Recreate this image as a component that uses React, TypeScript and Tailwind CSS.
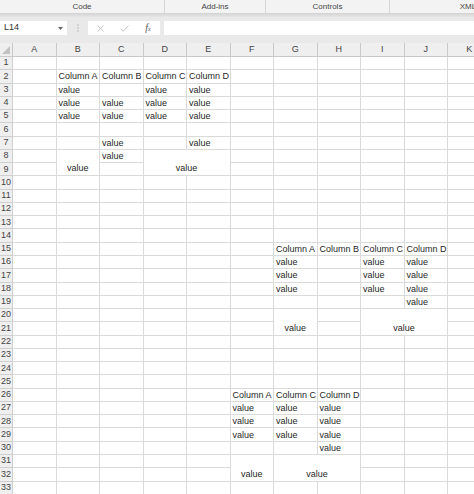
import React from 'react';

const COLS = ['A', 'B', 'C', 'D', 'E', 'F', 'G', 'H', 'I', 'J', 'K'];
const ROWS = Array.from({ length: 33 }, (_, i) => i + 1);

const V = 'value';

// cell contents by address
const CELLS: Record<string, string> = {
  B2: 'Column A', C2: 'Column B', D2: 'Column C', E2: 'Column D',
  B3: V, D3: V, E3: V,
  B4: V, C4: V, D4: V, E4: V,
  B5: V, C5: V, D5: V, E5: V,
  C7: V, E7: V,
  C8: V,
  B8: V, D8: V,

  G15: 'Column A', H15: 'Column B', I15: 'Column C', J15: 'Column D',
  G16: V, I16: V, J16: V,
  G17: V, I17: V, J17: V,
  G18: V, I18: V, J18: V,
  J19: V,
  G20: V, I20: V,

  F26: 'Column A', G26: 'Column C', H26: 'Column D',
  F27: V, G27: V, H27: V,
  F28: V, G28: V, H28: V,
  F29: V, G29: V, H29: V,
  H30: V,
  F31: V, G31: V,
};

// merged ranges: top-left cell -> span classes, plus the cells they hide
const MERGES: Record<string, { cls: string; covers: string[] }> = {
  B8: { cls: 'row-span-2', covers: ['B9'] },
  D8: { cls: 'row-span-2 col-span-2', covers: ['E8', 'D9', 'E9'] },
  G20: { cls: 'row-span-2', covers: ['G21'] },
  I20: { cls: 'row-span-2 col-span-2', covers: ['J20', 'I21', 'J21'] },
  F31: { cls: 'row-span-2', covers: ['F32'] },
  G31: { cls: 'row-span-2 col-span-2', covers: ['H31', 'G32', 'H32'] },
};

const COVERED = new Set(Object.values(MERGES).flatMap((m) => m.covers));

function RibbonLabels() {
  return (
    <div className="flex h-[13px] bg-[#f3f3f3] text-[8px] leading-[13px] text-[#444] overflow-hidden whitespace-nowrap">
      <div className="w-[165px] shrink-0 text-center border-r border-[#d6d6d6]">Code</div>
      <div className="w-[101px] shrink-0 text-center border-r border-[#d6d6d6]">Add-ins</div>
      <div className="w-[124px] shrink-0 text-center border-r border-[#d6d6d6]">Controls</div>
      <div className="w-[156px] shrink-0 text-center">XML</div>
    </div>
  );
}

function FormulaBar() {
  return (
    <div className="flex h-[26px] bg-[#e9e9e9] pt-[4px] items-start">
      <div className="w-[67px] h-[14px] bg-white flex items-center justify-between pl-[4px] pr-[4px]">
        <span className="text-[9px] text-[#333]">L14</span>
        <svg width="5" height="3" viewBox="0 0 5 3">
          <path d="M0 0 L5 0 L2.5 3 Z" fill="#666" />
        </svg>
      </div>
      <div className="w-[21px] h-[14px] flex items-center justify-center">
        <svg width="2" height="8" viewBox="0 0 2 8">
          <circle cx="1" cy="1" r="0.7" fill="#aaa" />
          <circle cx="1" cy="4" r="0.7" fill="#aaa" />
          <circle cx="1" cy="7" r="0.7" fill="#aaa" />
        </svg>
      </div>
      <div className="w-[72px] h-[14px] bg-white flex items-center">
        <div className="w-[24px] flex justify-center">
          <svg width="7" height="7" viewBox="0 0 7 7">
            <path d="M0.5 0.5 L6.5 6.5 M6.5 0.5 L0.5 6.5" stroke="#bdbdbd" strokeWidth="0.9" />
          </svg>
        </div>
        <div className="w-[24px] flex justify-center">
          <svg width="9" height="7" viewBox="0 0 9 7">
            <path d="M0.5 3.8 L3.2 6.3 L8.5 0.5" stroke="#bdbdbd" strokeWidth="0.9" fill="none" />
          </svg>
        </div>
        <div className="w-[24px] flex justify-center">
          <span className="font-['Liberation_Serif',serif] italic text-[10px] text-[#555] leading-none">
            f<span className="text-[6px]">x</span>
          </span>
        </div>
      </div>
      <div className="ml-[4px] flex-1 h-[14px] bg-white" />
    </div>
  );
}

function Sheet() {
  const cells: React.ReactNode[] = [];

  // header row
  cells.push(
    <div key="corner" className="bg-[#efefef] border-r border-b border-[#c9c9c9] relative">
      <svg className="absolute right-[2px] bottom-[2px]" width="8" height="8" viewBox="0 0 8 8">
        <path d="M8 0 L8 8 L0 8 Z" fill="#c2c2c2" />
      </svg>
    </div>
  );
  COLS.forEach((c) =>
    cells.push(
      <div
        key={`h-${c}`}
        className="bg-[#efefef] border-r border-b border-[#c9c9c9] flex items-center justify-center text-[9px] text-[#444]"
      >
        {c}
      </div>
    )
  );

  ROWS.forEach((r) => {
    cells.push(
      <div
        key={`r-${r}`}
        className="bg-[#efefef] border-r border-b border-[#cfcfcf] flex items-center justify-center text-[9px] text-[#444] overflow-hidden"
      >
        {r}
      </div>
    );
    COLS.forEach((c) => {
      const addr = `${c}${r}`;
      if (COVERED.has(addr)) return;
      const merge = MERGES[addr];
      const text = CELLS[addr];
      cells.push(
        <div
          key={addr}
          className={
            merge
              ? `${merge.cls} border-r border-b border-[#dadada] flex items-end justify-center pb-[2px] text-[9px] leading-[10px] text-[#1f1f1f] whitespace-nowrap`
              : 'border-r border-b border-[#dadada] flex items-center pl-[2px] text-[9px] leading-[10px] text-[#1f1f1f] whitespace-nowrap overflow-visible'
          }
        >
          {text}
        </div>
      );
    });
  });

  return (
    <div className="grid grid-cols-[13px_repeat(11,43.5px)] grid-rows-[14px_repeat(33,13.27px)] bg-white">
      {cells}
    </div>
  );
}

export default function App() {
  return (
    <div className="w-[474px] h-[494px] overflow-hidden bg-white font-['Liberation_Sans',Arial,sans-serif]">
      <RibbonLabels />
      <div className="h-[4px] bg-gradient-to-b from-[#d2d2d2] to-[#e6e6e6]" />
      <FormulaBar />
      <Sheet />
    </div>
  );
}
